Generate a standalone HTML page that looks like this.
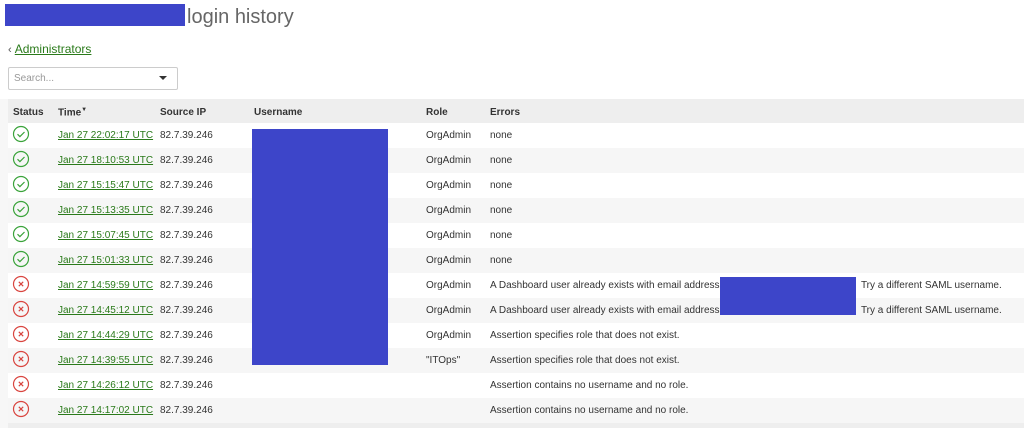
<!DOCTYPE html>
<html><head><style>
body{margin:0;width:1024px;height:428px;overflow:hidden;background:#fff;font-family:"Liberation Sans",sans-serif;color:#333;position:relative}
.abs{position:absolute}
.t{font-size:10px;white-space:nowrap}
a{color:#2a7a1a;text-decoration:underline}
</style></head><body>
<div class="abs" style="left:5px;top:4px;width:180px;height:22px;background:#3d45c9"></div>
<div class="abs" style="left:187px;top:6px;font-size:20px;color:#666;font-weight:300">login history</div>
<div class="abs" style="left:8px;top:42px;font-size:11px;color:#555">‹ <a style="font-size:12px;color:#2a7a1a">Administrators</a></div>
<div class="abs" style="left:8px;top:67px;width:168px;height:21px;border:1px solid #ccc;border-radius:2px"></div>
<div class="abs t" style="left:14px;top:73px;color:#999">Search...</div>
<div class="abs" style="left:159px;top:76px;width:0;height:0;border-left:4px solid transparent;border-right:4px solid transparent;border-top:4px solid #333"></div>
<div class="abs" style="left:8px;top:99px;width:1016px;height:24px;background:#eee"></div>
<div class="abs" style="left:8px;top:420px;width:1016px;height:8px;background:#eee"></div>
<div class="abs" style="left:0;top:99px;width:8px;height:329px;background:#f7f7f7"></div>
<div id="rows"></div>
<div class="abs t" style="left:13px;top:107px;font-weight:bold">Status</div>
<div class="abs t" style="left:58px;top:107px;font-weight:bold">Time<sup style="font-size:6px">▼</sup></div>
<div class="abs t" style="left:160px;top:107px;font-weight:bold">Source IP</div>
<div class="abs t" style="left:254px;top:107px;font-weight:bold">Username</div>
<div class="abs t" style="left:426px;top:107px;font-weight:bold">Role</div>
<div class="abs t" style="left:490px;top:107px;font-weight:bold">Errors</div>
<script>
var times=["22:02:17","18:10:53","15:15:47","15:13:35","15:07:45","15:01:33","14:59:59","14:45:12","14:44:29","14:39:55","14:26:12","14:17:02"];
var roles=["OrgAdmin","OrgAdmin","OrgAdmin","OrgAdmin","OrgAdmin","OrgAdmin","OrgAdmin","OrgAdmin","OrgAdmin",'"ITOps"',"",""];
var errs=["none","none","none","none","none","none","A Dashboard user already exists with email address <span style='display:inline-block;width:136px'></span> Try a different SAML username.","A Dashboard user already exists with email address <span style='display:inline-block;width:136px'></span> Try a different SAML username.","Assertion specifies role that does not exist.","Assertion specifies role that does not exist.","Assertion contains no username and no role.","Assertion contains no username and no role."];
var h="";
for(var i=0;i<12;i++){var y=123+i*25;var ok=i<6;var c=ok?"#3aa33a":"#d9453f";
if(i%2==1)h+='<div class="abs" style="left:8px;top:'+y+'px;width:1016px;height:25px;background:#f6f6f6"></div>';
h+='<svg class="abs" style="left:12px;top:'+(y+2)+'px" width="18" height="18" viewBox="0 0 18 18"><circle cx="9" cy="9" r="7.5" fill="none" stroke="'+c+'" stroke-width="1.2"/>'+(ok?'<path d="M5.5 9.2l2.4 2.4 4.6-4.6" fill="none" stroke="'+c+'" stroke-width="1.2"/>':'<path d="M6.8 6.8l4.4 4.4M11.2 6.8l-4.4 4.4" stroke="'+c+'" stroke-width="1.2"/>')+'</svg>';
h+='<div class="abs t" style="left:58px;top:'+(y+7)+'px"><a>Jan 27 '+times[i]+' UTC</a></div>';
h+='<div class="abs t" style="left:160px;top:'+(y+7)+'px">82.7.39.246</div>';
h+='<div class="abs t" style="left:426px;top:'+(y+7)+'px">'+roles[i]+'</div>';
h+='<div class="abs t" style="left:490px;top:'+(y+7)+'px">'+errs[i]+'</div>';}
document.getElementById("rows").innerHTML=h;
</script>
<div class="abs" style="left:252px;top:129px;width:136px;height:236px;background:#3d45c9"></div>
<div class="abs" style="left:720px;top:277px;width:136px;height:38px;background:#3d45c9"></div>
</body></html>
